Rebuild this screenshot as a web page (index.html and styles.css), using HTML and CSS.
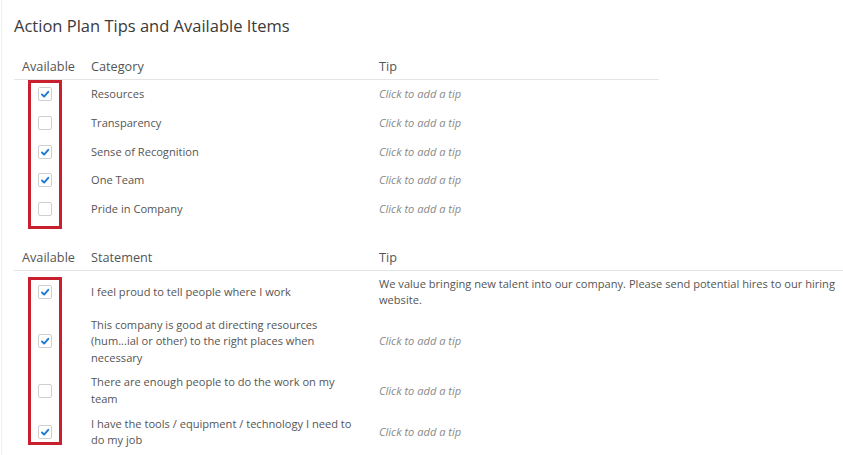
FILE: index.html
```html
<!DOCTYPE html>
<html>
<head>
<meta charset="utf-8">
<link rel="stylesheet" href="styles.css">
</head>
<body>
<div class="page">
  <h1 class="title">Action Plan Tips and Available Items</h1>

  <div class="table table-cat">
    <div class="row head">
      <div class="c-avail">Available</div>
      <div class="c-item">Category</div>
      <div class="c-tip">Tip</div>
    </div>
    <div class="row body-row">
      <div class="c-avail"><span class="cb on"><svg viewBox="0 0 14 14"><path d="M3.5 7.6 L6 10 L10.8 4.4"/></svg></span></div>
      <div class="c-item">Resources</div>
      <div class="c-tip empty">Click to add a tip</div>
    </div>
    <div class="row body-row">
      <div class="c-avail"><span class="cb"></span></div>
      <div class="c-item">Transparency</div>
      <div class="c-tip empty">Click to add a tip</div>
    </div>
    <div class="row body-row">
      <div class="c-avail"><span class="cb on"><svg viewBox="0 0 14 14"><path d="M3.5 7.6 L6 10 L10.8 4.4"/></svg></span></div>
      <div class="c-item">Sense of Recognition</div>
      <div class="c-tip empty">Click to add a tip</div>
    </div>
    <div class="row body-row">
      <div class="c-avail"><span class="cb on"><svg viewBox="0 0 14 14"><path d="M3.5 7.6 L6 10 L10.8 4.4"/></svg></span></div>
      <div class="c-item">One Team</div>
      <div class="c-tip empty">Click to add a tip</div>
    </div>
    <div class="row body-row">
      <div class="c-avail"><span class="cb"></span></div>
      <div class="c-item">Pride in Company</div>
      <div class="c-tip empty">Click to add a tip</div>
    </div>
    <div class="highlight hl-1"></div>
  </div>

  <div class="table table-stmt">
    <div class="row head">
      <div class="c-avail">Available</div>
      <div class="c-item">Statement</div>
      <div class="c-tip">Tip</div>
    </div>
    <div class="row body-row multi">
      <div class="c-avail"><span class="cb on"><svg viewBox="0 0 14 14"><path d="M3.5 7.6 L6 10 L10.8 4.4"/></svg></span></div>
      <div class="c-item">I feel proud to tell people where I work</div>
      <div class="c-tip">We value bringing new talent into our company. Please send potential hires to our hiring website.</div>
    </div>
    <div class="row body-row multi">
      <div class="c-avail"><span class="cb on"><svg viewBox="0 0 14 14"><path d="M3.5 7.6 L6 10 L10.8 4.4"/></svg></span></div>
      <div class="c-item">This company is good at directing resources (hum...ial or other) to the right places when necessary</div>
      <div class="c-tip empty">Click to add a tip</div>
    </div>
    <div class="row body-row multi">
      <div class="c-avail"><span class="cb"></span></div>
      <div class="c-item">There are enough people to do the work on my team</div>
      <div class="c-tip empty">Click to add a tip</div>
    </div>
    <div class="row body-row multi">
      <div class="c-avail"><span class="cb on"><svg viewBox="0 0 14 14"><path d="M3.5 7.6 L6 10 L10.8 4.4"/></svg></span></div>
      <div class="c-item">I have the tools / equipment / technology I need to do my job</div>
      <div class="c-tip empty">Click to add a tip</div>
    </div>
    <div class="highlight hl-2"></div>
  </div>
</div>
</body>
</html>
```

FILE: styles.css
```css
html, body {
  margin: 0;
  padding: 0;
  background: #ffffff;
}

body {
  font-family: "Open Sans", "Noto Sans", sans-serif;
  color: #555555;
  overflow: hidden;
}

.page {
  margin-left: 1px;
  border-left: 1px solid #f0f0f0;
  padding-left: 12px;
  min-height: 455px;
  box-sizing: border-box;
}

.title {
  margin: 0;
  padding-top: 13px;
  font-size: 16.5px;
  line-height: 26px;
  font-weight: 400;
  color: #3a3a3a;
}

.table {
  position: relative;
}

.table-cat {
  width: 645px;
  margin-top: 14px;
}

.table-stmt {
  width: 840px;
  margin-top: 21px;
}

.row {
  display: grid;
  grid-template-columns: 77px 288px 1fr;
}

.head {
  height: 26px;
  align-items: center;
  border-bottom: 1.5px solid #e4e4e4;
  font-size: 12.7px;
  color: #555555;
}

.head .c-avail {
  padding-left: 8px;
}

.body-row {
  height: 28.7px;
  align-items: center;
  font-size: 11.1px;
  line-height: 16.4px;
  color: #555555;
}

.body-row.multi {
  height: auto;
  padding: 4.2px 0;
}

.c-item {
  padding-right: 12px;
}

.table-stmt .c-item {
  padding-right: 22px;
}

.table-stmt .c-tip {
  padding-right: 6px;
}

.body-row .c-avail {
  padding-left: 24px;
  display: flex;
  align-items: center;
}

.c-tip.empty {
  font-style: italic;
  color: #8a8a8a;
}

.cb {
  display: block;
  width: 14px;
  height: 14px;
  box-sizing: border-box;
  border: 1px solid #cfcfcf;
  border-radius: 2px;
  background: #ffffff;
}

.cb svg {
  display: block;
  width: 12px;
  height: 12px;
}

.cb svg path {
  fill: none;
  stroke: #1f78d1;
  stroke-width: 2.2;
  stroke-linecap: round;
  stroke-linejoin: round;
}

.highlight {
  position: absolute;
  border: 3px solid #c8202f;
  box-sizing: border-box;
  pointer-events: none;
}

.hl-1 {
  left: 14px;
  top: 27px;
  width: 34px;
  height: 149px;
}

.hl-2 {
  left: 14px;
  top: 33px;
  width: 34px;
  height: 168px;
}
```
